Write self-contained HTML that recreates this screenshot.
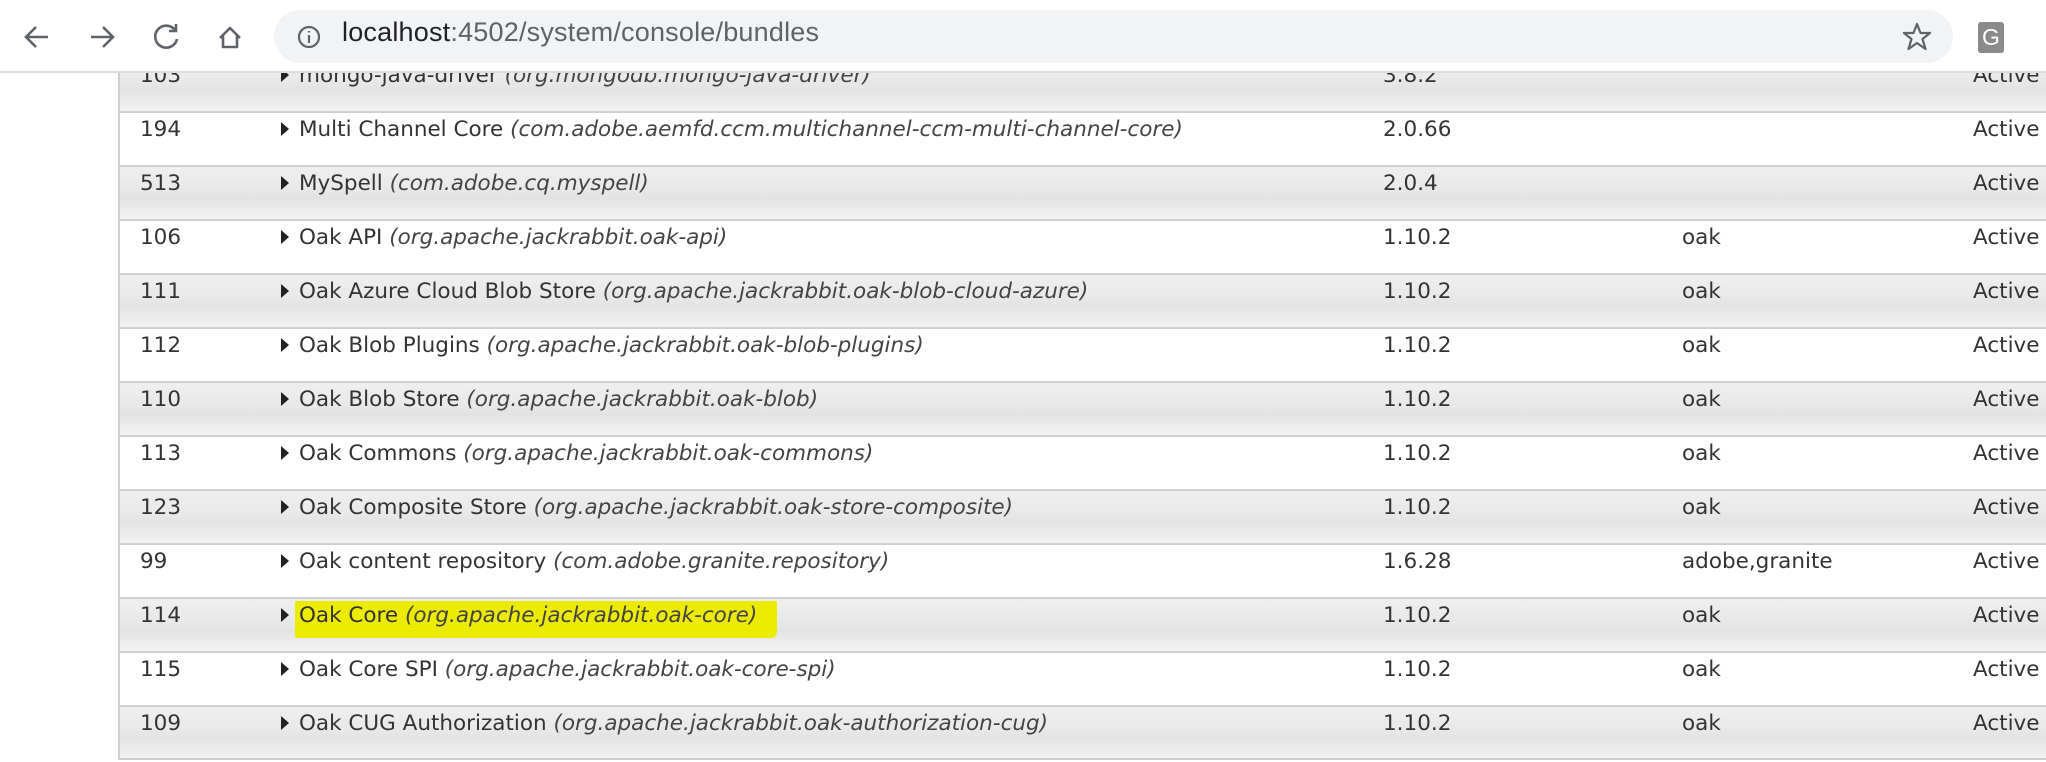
<!DOCTYPE html>
<html><head><style>
body{margin:0;width:2046px;height:760px;overflow:hidden;background:#fff;font-family:"DejaVu Sans",sans-serif;position:relative}
.tb{position:absolute;left:0;top:0;width:2046px;height:71px;background:#fff;border-bottom:2px solid #dadce0;z-index:5}
.omni{position:absolute;left:274px;top:10px;width:1679px;height:53px;border-radius:27px;background:#f1f3f4}
.url{position:absolute;left:342px;top:17px;font-family:"Liberation Sans",sans-serif;font-size:27px;color:#5f6368;letter-spacing:0.2px}
.url b{font-weight:normal;color:#202124}
.g{position:absolute;left:1978px;top:22px;width:26px;height:31px;background:#8a8a8a;border-radius:3px;color:#fff;font-family:"Liberation Sans",sans-serif;font-size:23px;text-align:center;line-height:31px}
.row{position:absolute;left:0;width:2000px;height:52px;border-top:2px solid #cfcfcf;color:#333;font-size:21.5px}
.row.a{background:linear-gradient(#efefef 0%,#e8e8e8 45%,#e3e3e3 60%,#f3f3f3 100%)}
.row span{position:absolute;top:4px;white-space:nowrap}
.row i{color:#444}
.tri{position:absolute;left:161px;top:9px;width:0;height:0;border-top:7px solid transparent;border-bottom:7px solid transparent;border-left:8px solid #222}
.hl{position:absolute;left:175px;top:2px;width:482px;height:37px;background:#ecec00;border-radius:2px 2px 6px 2px}
</style></head><body>
<div style="position:absolute;border-left:2px solid #cfcfcf;height:720px;top:40px;left:118px"></div>
<div id="rows"></div>
<div class="tb">
<svg width="260" height="72" style="position:absolute;left:0;top:0" fill="none" stroke="#5f6368" stroke-width="2.6">
<path d="M48 37H26M36 27L26 37L36 47"/>
<path d="M91 37H113M103 27L113 37L103 47"/>
<path d="M175 30A11 11 0 1 0 177 39"/><path d="M176 24V31H169" stroke-linejoin="miter"/>
<path d="M220 38L230 28L240 38M223 35V47H237V35" stroke-linejoin="round"/>
</svg>
<div class="omni"></div>
<svg width="30" height="30" style="position:absolute;left:296px;top:22px" fill="none" stroke="#5f6368" stroke-width="2.2"><circle cx="13" cy="15" r="10"/><path d="M13 13V21M13 9V10.5"/></svg>
<div class="url"><b>localhost</b>:4502/system/console/bundles</div>
<svg width="34" height="34" style="position:absolute;left:1900px;top:20px" fill="none" stroke="#5f6368" stroke-width="2.2" stroke-linejoin="round"><path d="M17 4L20.5 13H30L22.5 19L25.5 29L17 23L8.5 29L11.5 19L4 13H13.5Z"/></svg>
<div class="g">G</div>
</div>
<script>
var d=[["103","mongo-java-driver","org.mongodb.mongo-java-driver","3.8.2",""],
["194","Multi Channel Core","com.adobe.aemfd.ccm.multichannel-ccm-multi-channel-core","2.0.66",""],
["513","MySpell","com.adobe.cq.myspell","2.0.4",""],
["106","Oak API","org.apache.jackrabbit.oak-api","1.10.2","oak"],
["111","Oak Azure Cloud Blob Store","org.apache.jackrabbit.oak-blob-cloud-azure","1.10.2","oak"],
["112","Oak Blob Plugins","org.apache.jackrabbit.oak-blob-plugins","1.10.2","oak"],
["110","Oak Blob Store","org.apache.jackrabbit.oak-blob","1.10.2","oak"],
["113","Oak Commons","org.apache.jackrabbit.oak-commons","1.10.2","oak"],
["123","Oak Composite Store","org.apache.jackrabbit.oak-store-composite","1.10.2","oak"],
["99","Oak content repository","com.adobe.granite.repository","1.6.28","adobe,granite"],
["114","Oak Core","org.apache.jackrabbit.oak-core","1.10.2","oak"],
["115","Oak Core SPI","org.apache.jackrabbit.oak-core-spi","1.10.2","oak"],
["109","Oak CUG Authorization","org.apache.jackrabbit.oak-authorization-cug","1.10.2","oak"]];
var tops=[57,111,165,219,273,327,381,435,489,543,597,651,705],h="";
d.forEach(function(r,i){h+='<div class="row'+(i%2==0?' a':'')+'" style="left:120px;top:'+tops[i]+'px;">'+(i==10?'<div class="hl"></div>':'')+
'<span style="left:20px">'+r[0]+'</span><div class="tri"></div><span style="left:179px">'+r[1]+' <i>('+r[2]+')</i></span>'+
'<span style="left:1263px">'+r[3]+'</span><span style="left:1562px">'+r[4]+'</span><span style="left:1853px">Active</span></div>';});
h+='<div class="row" style="left:120px;top:758px;height:2px"></div>';
document.getElementById("rows").innerHTML=h;
</script>
</body></html>
